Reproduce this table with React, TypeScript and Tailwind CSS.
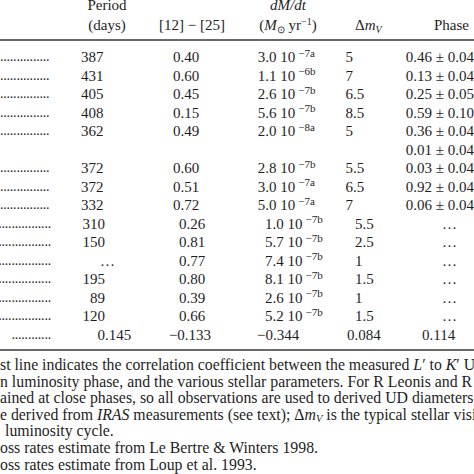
import type { ReactNode } from "react";

type Row = {
  dots?: "full" | "short";
  period?: string;
  color?: ReactNode;
  mdot?: ReactNode;
  dm?: string;
  phase?: string;
};

const M = ({ v, e, n }: { v: string; e: string; n: string }) => (
  <span>
    {v} 10
    <sup className="text-[11px] ml-[3px]">
      −{e}
      {n}
    </sup>
  </span>
);

const rows: Row[] = [
  { dots: "full", period: "387", color: "0.40", mdot: <M v="3.0" e="7" n="a" />, dm: "5", phase: "0.46 ± 0.04" },
  { dots: "full", period: "431", color: "0.60", mdot: <M v="1.1" e="6" n="b" />, dm: "7", phase: "0.13 ± 0.04" },
  { dots: "full", period: "405", color: "0.45", mdot: <M v="2.6" e="7" n="b" />, dm: "6.5", phase: "0.25 ± 0.05" },
  { dots: "full", period: "408", color: "0.15", mdot: <M v="5.6" e="7" n="b" />, dm: "8.5", phase: "0.59 ± 0.10" },
  { dots: "full", period: "362", color: "0.49", mdot: <M v="2.0" e="8" n="a" />, dm: "5", phase: "0.36 ± 0.04" },
  { phase: "0.01 ± 0.04" },
  { dots: "full", period: "372", color: "0.60", mdot: <M v="2.8" e="7" n="b" />, dm: "5.5", phase: "0.03 ± 0.04" },
  { dots: "full", period: "372", color: "0.51", mdot: <M v="3.0" e="7" n="a" />, dm: "6.5", phase: "0.92 ± 0.04" },
  { dots: "full", period: "332", color: "0.72", mdot: <M v="5.0" e="7" n="a" />, dm: "7", phase: "0.06 ± 0.04" },
  { dots: "full", period: "310", color: "0.26", mdot: <M v="1.0" e="7" n="b" />, dm: "5.5", phase: "…" },
  { dots: "full", period: "150", color: "0.81", mdot: <M v="5.7" e="7" n="b" />, dm: "2.5", phase: "…" },
  { dots: "full", period: "…", color: "0.77", mdot: <M v="7.4" e="7" n="b" />, dm: "1", phase: "…" },
  { dots: "full", period: "195", color: "0.80", mdot: <M v="8.1" e="7" n="b" />, dm: "1.5", phase: "…" },
  { dots: "full", period: "89", color: "0.39", mdot: <M v="2.6" e="7" n="b" />, dm: "1", phase: "…" },
  { dots: "full", period: "120", color: "0.66", mdot: <M v="5.2" e="7" n="b" />, dm: "1.5", phase: "…" },
];

// period column is aligned on the decimal point (x = 105)
function Period({ v }: { v?: string }) {
  if (!v) return <div className="w-[98px]" />;
  if (v === "…") return <div className="w-[98px] pl-[48px]">…</div>;
  const [i, f] = v.split(".");
  return (
    <div className="w-[98px] flex">
      <span className="w-[53px] text-right">{i}</span>
      {f !== undefined && <span>.{f}</span>}
    </div>
  );
}

function Dots({ kind }: { kind?: "full" | "short" }) {
  return (
    <div className="w-[52px] overflow-hidden flex justify-end text-[14px] tracking-[-0.2px]">
      {kind === "full" && <span className="whitespace-nowrap pr-[1px]">.................</span>}
      {kind === "short" && <span className="whitespace-nowrap pr-[1px]">............</span>}
    </div>
  );
}

function BodyRow({ r }: { r: Row }) {
  return (
    <div className="flex h-[18.5px] leading-[18.5px] whitespace-nowrap">
      <Dots kind={r.dots} />
      <Period v={r.period} />
      <div className="w-[84px] text-center">{r.color}</div>
      <div className="w-[108px] pl-[31px]">{r.mdot}</div>
      <div className="w-[68px] pl-[13px]">{r.dm}</div>
      <div className={r.phase === "…" ? "pl-[32px]" : "pl-[7px]"}>{r.phase}</div>
    </div>
  );
}

export default function App() {
  return (
    <div className="w-[474px] h-[474px] overflow-hidden bg-white text-[#1e1e1e] font-['Liberation_Serif','Times_New_Roman',serif] text-[15px]">
      <div className="mt-[-5px]">
        <div className="flex h-[20px] leading-[20px] whitespace-nowrap">
          <div className="w-[64px]" />
          <div className="w-[86px] text-center">Period</div>
          <div className="w-[84px]" />
          <div className="w-[108px] text-center italic">dM/dt</div>
        </div>
        <div className="flex h-[20px] leading-[20px] whitespace-nowrap">
          <div className="w-[64px]" />
          <div className="w-[86px] text-center">(days)</div>
          <div className="w-[84px] text-center">[12] − [25]</div>
          <div className="w-[108px] text-center">
            (<i>M</i>
            <sub className="text-[10px]">⊙</sub> yr<sup className="text-[10px]">−1</sup>)
          </div>
          <div className="w-[68px] pl-[13px]">
            Δ<i>m</i>
            <sub className="text-[10px] italic">V</sub>
          </div>
          <div className="pl-[24px]">Phase</div>
        </div>
      </div>
      <div className="mt-[4px] h-[2px] bg-[#6a6a6a]" />
      <div className="pt-[7px]">
        {rows.map((r, i) => (
          <BodyRow key={i} r={r} />
        ))}
        <div className="flex h-[18.5px] leading-[18.5px] whitespace-nowrap">
          <Dots kind="short" />
          <Period v="0.145" />
          <div className="w-[84px] text-center pr-[4px]">−0.133</div>
          <div className="w-[108px] pl-[23px]">−0.344</div>
          <div className="w-[68px] pl-[5px]">0.084</div>
          <div className="pl-[12px]">0.114</div>
        </div>
      </div>
      <div className="mt-[5px] h-[2px] bg-[#6a6a6a]" />
      <div className="pt-[6px] text-[15.8px] leading-[16.6px] whitespace-nowrap">
        <div>
          st line indicates the correlation coefficient between the measured <i>L</i>′ to <i>K</i>′ UD diameter ratio
        </div>
        <div>n luminosity phase, and the various stellar parameters. For R Leonis and R Cas</div>
        <div>ained at close phases, so all observations are used to derived UD diameters</div>
        <div>
          e derived from <i>IRAS</i> measurements (see text); Δ<i>m</i>
          <sub className="text-[10.5px] italic">V</sub> is the typical stellar visible amplitude
        </div>
        <div className="pl-[5px]">luminosity cycle.</div>
        <div>oss rates estimate from Le Bertre &amp; Winters 1998.</div>
        <div>oss rates estimate from Loup et al. 1993.</div>
      </div>
    </div>
  );
}
